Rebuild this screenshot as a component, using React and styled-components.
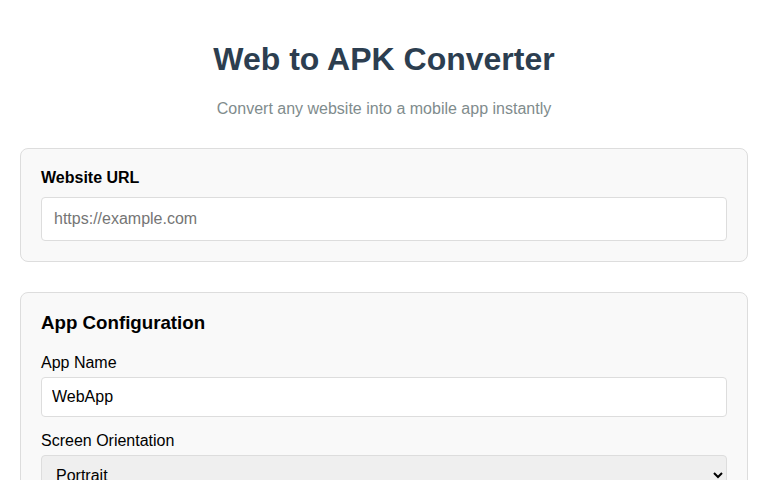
import React, { useState } from "react";
import styled, { createGlobalStyle } from "styled-components";

const Global = createGlobalStyle`
  * { box-sizing: border-box; }
  body {
    margin: 0;
    font-family: "Liberation Sans", Arial, sans-serif;
    background: #ffffff;
    color: #000;
  }
`;

const Page = styled.div`
  max-width: 768px;
  margin: 0 auto;
  padding: 20px;
`;

const Header = styled.header`
  text-align: center;
  margin-bottom: 30px;
`;

const Title = styled.h1`
  font-size: 32px;
  font-weight: bold;
  color: #2c3e50;
  margin: 21px 0 22px;
`;

const Subtitle = styled.p`
  font-size: 16px;
  color: #7f8c8d;
  margin: 0;
`;

const Card = styled.section`
  background: #f9f9f9;
  border: 1px solid #dddddd;
  border-radius: 8px;
  padding: 20px;
  margin-bottom: 30px;
`;

const CardTitle = styled.h3`
  font-size: 18.72px;
  font-weight: bold;
  margin: -1px 0 20px;
`;

const Group = styled.div`
  margin-bottom: ${(p) => (p.$last ? "0" : "15px")};
`;

const Label = styled.label`
  display: block;
  font-size: 16px;
  font-weight: ${(p) => (p.$bold ? "bold" : "normal")};
  margin-bottom: ${(p) => (p.$bold ? "10px" : "5px")};
`;

const Input = styled.input`
  display: block;
  width: 100%;
  font-family: inherit;
  font-size: 16px;
  padding: ${(p) => (p.$large ? "12px" : "10px")};
  border: 1px solid #dddddd;
  border-radius: 4px;
  background: #ffffff;
  color: #000;
  &::placeholder { color: #757575; }
`;

const Select = styled.select`
  display: block;
  width: 100%;
  font-family: inherit;
  font-size: 16px;
  padding: 10px;
  border: 1px solid #dddddd;
  border-radius: 4px;
  background-color: #efefef;
  color: #000;
`;

const Button = styled.button`
  display: block;
  width: 100%;
  padding: 14px;
  font-family: inherit;
  font-size: 18px;
  font-weight: bold;
  color: #fff;
  background: #3498db;
  border: none;
  border-radius: 4px;
`;

export default function App() {
  const [url, setUrl] = useState("");
  const [name, setName] = useState("WebApp");
  const [orientation, setOrientation] = useState("portrait");
  return (
    <>
      <Global />
      <Page>
        <Header>
          <Title>Web to APK Converter</Title>
          <Subtitle>Convert any website into a mobile app instantly</Subtitle>
        </Header>

        <Card>
          <Label $bold htmlFor="url">Website URL</Label>
          <Input
            id="url"
            $large
            type="url"
            placeholder="https://example.com"
            value={url}
            onChange={(e) => setUrl(e.target.value)}
          />
        </Card>

        <Card>
          <CardTitle>App Configuration</CardTitle>
          <Group>
            <Label htmlFor="name">App Name</Label>
            <Input id="name" value={name} onChange={(e) => setName(e.target.value)} />
          </Group>
          <Group>
            <Label htmlFor="orient">Screen Orientation</Label>
            <Select id="orient" value={orientation} onChange={(e) => setOrientation(e.target.value)}>
              <option value="portrait">Portrait</option>
              <option value="landscape">Landscape</option>
              <option value="auto">Auto</option>
            </Select>
          </Group>
          <Group $last>
            <Label htmlFor="color">Theme Color</Label>
            <Input id="color" defaultValue="#3498db" />
          </Group>
        </Card>

        <Button type="button">Convert to APK</Button>
      </Page>
    </>
  );
}
